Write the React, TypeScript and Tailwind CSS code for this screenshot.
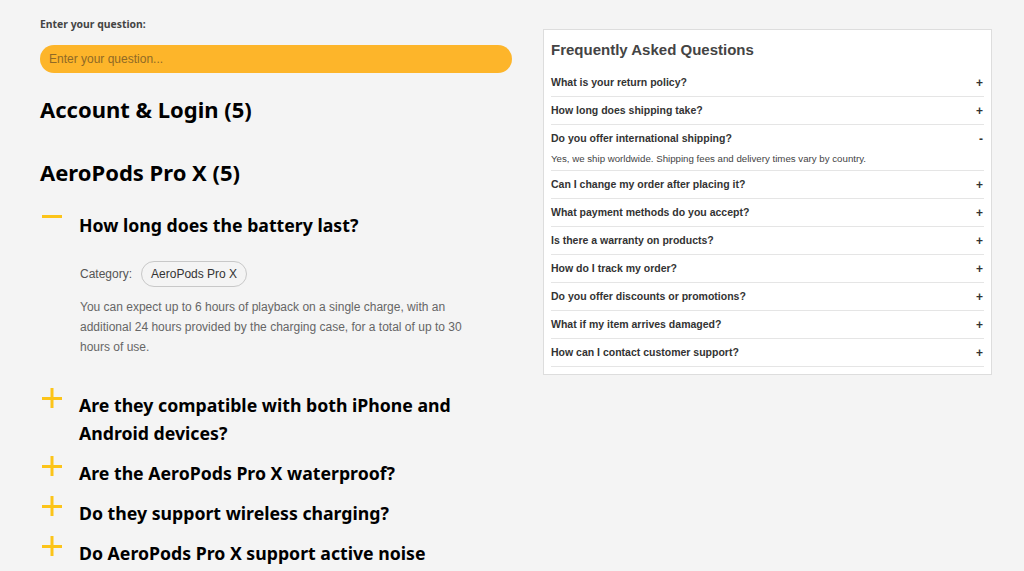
import React from "react";

const seg = { fontFamily: '"Noto Sans", "Open Sans", sans-serif' };
const ari = { fontFamily: '"Liberation Sans", Arial, sans-serif' };

function Plus() {
  return (
    <svg width="20" height="20" viewBox="0 0 20 20" className="shrink-0">
      <rect x="0" y="9" width="20" height="3" fill="#fcc419" />
      <rect x="8.5" y="0" width="3" height="20" fill="#fcc419" />
    </svg>
  );
}
function Minus() {
  return (
    <svg width="20" height="20" viewBox="0 0 20 20" className="shrink-0">
      <rect x="0" y="9" width="20" height="3" fill="#fcc419" />
    </svg>
  );
}

const faqs = [
  "What is your return policy?",
  "How long does shipping take?",
  "Do you offer international shipping?",
  "Can I change my order after placing it?",
  "What payment methods do you accept?",
  "Is there a warranty on products?",
  "How do I track my order?",
  "Do you offer discounts or promotions?",
  "What if my item arrives damaged?",
  "How can I contact customer support?",
];

export default function App() {
  return (
    <div className="w-[1024px] h-[571px] overflow-hidden bg-[#f4f4f4] flex gap-[31px] pl-[40px]">
      <div className="w-[472px] shrink-0 pt-[16px]">
        <div className="text-[10.4px] font-bold text-[#444] leading-[16px]" style={seg}>
          Enter your question:
        </div>
        <div
          className="mt-[13px] h-[28px] rounded-full bg-[#fdb52a] flex items-center pl-[9px] text-[12px] text-[#8f6a26]"
          style={ari}
        >
          Enter your question...
        </div>
        <h2 className="mt-[21px] text-[22px] font-bold text-black leading-[30px]" style={seg}>
          Account &amp; Login (5)
        </h2>
        <h2 className="mt-[33px] text-[22px] font-bold text-black leading-[30px]" style={seg}>
          AeroPods Pro X (5)
        </h2>
        <div className="mt-[22px] flex items-start">
          <div className="w-[39px] pl-[2px] -mt-[3px]">
            <Minus />
          </div>
          <div className="mt-[2px] text-[17.7px] font-bold text-black leading-[28px]" style={seg}>
            How long does the battery last?
          </div>
        </div>
        <div className="pl-[40px] pt-[22px]" style={ari}>
          <div className="flex items-center gap-[9px] text-[12px]">
            <span className="text-[#555]">Category:</span>
            <span className="h-[26px] px-[9px] rounded-full border border-[#c8c8c8] flex items-center text-[#333]">
              AeroPods Pro X
            </span>
          </div>
          <p className="mt-[10px] w-[390px] text-[12px] leading-[20px] text-[#666]">
            You can expect up to 6 hours of playback on a single charge, with an additional 24 hours provided by the
            charging case, for a total of up to 30 hours of use.
          </p>
        </div>
        <div className="mt-[34px] flex flex-col gap-[12px]">
          {[
            "Are they compatible with both iPhone and Android devices?",
            "Are the AeroPods Pro X waterproof?",
            "Do they support wireless charging?",
            "Do AeroPods Pro X support active noise cancellation?",
          ].map((q) => (
            <div key={q} className="flex items-start">
              <div className="w-[39px] pl-[2px] -mt-[3px]">
                <Plus />
              </div>
              <div className="w-[390px] text-[17.7px] font-bold text-black leading-[28px]" style={seg}>
                {q}
              </div>
            </div>
          ))}
        </div>
      </div>
      <div className="pt-[29px]">
        <div className="w-[449px] bg-white border border-[#ddd] px-[7px] pt-[10px] pb-[7px]" style={ari}>
          <h3 className="text-[15px] font-bold text-[#444] leading-[20px]">Frequently Asked Questions</h3>
          <div className="mt-[9px]">
            {faqs.map((q, i) => (
              <div key={q} className="border-b border-[#e5e5e5]">
                <div className="flex items-center justify-between h-[27px] text-[10.5px] font-bold text-[#333]">
                  <span>{q}</span>
                  <span className="text-[12px] pr-[1px]">{i === 2 ? "-" : "+"}</span>
                </div>
                {i === 2 && (
                  <div className="text-[9.7px] text-[#444] leading-[14px] pb-[4px]">
                    Yes, we ship worldwide. Shipping fees and delivery times vary by country.
                  </div>
                )}
              </div>
            ))}
          </div>
        </div>
      </div>
    </div>
  );
}
